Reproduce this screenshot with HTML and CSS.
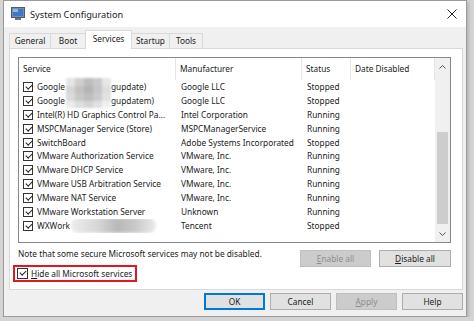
FILE: index.html
```html
<!DOCTYPE html>
<html lang="en">
<head>
  <meta charset="UTF-8">
  <title>System Configuration</title>
  <link rel="stylesheet" href="styles.css">
</head>
<body>

  <div class="window">
    <div class="titlebar">
      <svg class="app-icon" width="14" height="13" viewBox="0 0 14 13">
        <rect x="0.5" y="0.5" width="13" height="10" fill="#7d8da3" stroke="#4b5a70"/>
        <rect x="2" y="2" width="10" height="7" fill="#3f78c9"/>
        <rect x="2" y="2" width="5" height="3" fill="#8fb6e8"/>
        <rect x="4" y="11" width="6" height="2" fill="#6b7484"/>
      </svg>
      <span class="title">System Configuration</span>
      <svg class="close" width="10" height="10" viewBox="0 0 10 10">
        <path d="M0.5 0.5 L9.5 9.5 M9.5 0.5 L0.5 9.5" stroke="#222" stroke-width="1"/>
      </svg>
    </div>

    <div class="tabs">
      <div class="tab" style="width:40px">General</div>
      <div class="tab" style="width:34px">Boot</div>
      <div class="tab active" style="width:45px">Services</div>
      <div class="tab" style="width:37px">Startup</div>
      <div class="tab" style="width:32px">Tools</div>
    </div>

    <div class="panel">
      <div class="listbox">
        <div class="list">
          <div class="row head">
            <div class="cell">Service</div>
            <div class="cell">Manufacturer</div>
            <div class="cell">Status</div>
            <div class="cell">Date Disabled</div>
          </div>
          <div class="row">
            <div class="cell name"><span class="chk"></span>Google<span class="gap1"></span>gupdate)</div>
            <div class="cell">Google LLC</div>
            <div class="cell">Stopped</div>
            <div class="cell"></div>
          </div>
          <div class="row">
            <div class="cell name"><span class="chk"></span>Google<span class="gap1"></span>gupdatem)</div>
            <div class="cell">Google LLC</div>
            <div class="cell">Stopped</div>
            <div class="cell"></div>
          </div>
          <div class="row">
            <div class="cell name"><span class="chk"></span>Intel(R) HD Graphics Control Pa...</div>
            <div class="cell">Intel Corporation</div>
            <div class="cell">Running</div>
            <div class="cell"></div>
          </div>
          <div class="row">
            <div class="cell name"><span class="chk"></span>MSPCManager Service (Store)</div>
            <div class="cell">MSPCManagerService</div>
            <div class="cell">Running</div>
            <div class="cell"></div>
          </div>
          <div class="row">
            <div class="cell name"><span class="chk"></span>SwitchBoard</div>
            <div class="cell">Adobe Systems Incorporated</div>
            <div class="cell">Stopped</div>
            <div class="cell"></div>
          </div>
          <div class="row">
            <div class="cell name"><span class="chk"></span>VMware Authorization Service</div>
            <div class="cell">VMware, Inc.</div>
            <div class="cell">Running</div>
            <div class="cell"></div>
          </div>
          <div class="row">
            <div class="cell name"><span class="chk"></span>VMware DHCP Service</div>
            <div class="cell">VMware, Inc.</div>
            <div class="cell">Running</div>
            <div class="cell"></div>
          </div>
          <div class="row">
            <div class="cell name"><span class="chk"></span>VMware USB Arbitration Service</div>
            <div class="cell">VMware, Inc.</div>
            <div class="cell">Running</div>
            <div class="cell"></div>
          </div>
          <div class="row">
            <div class="cell name"><span class="chk"></span>VMware NAT Service</div>
            <div class="cell">VMware, Inc.</div>
            <div class="cell">Running</div>
            <div class="cell"></div>
          </div>
          <div class="row">
            <div class="cell name"><span class="chk"></span>VMware Workstation Server</div>
            <div class="cell">Unknown</div>
            <div class="cell">Running</div>
            <div class="cell"></div>
          </div>
          <div class="row">
            <div class="cell name"><span class="chk"></span>WXWork<span class="blur2"></span></div>
            <div class="cell">Tencent</div>
            <div class="cell">Stopped</div>
            <div class="cell"></div>
          </div>

          <!-- pixelated blur over the two Google rows -->
          <div class="blur1">
            <i style="background:#e4e4e4"></i><i style="background:#cfcfcf"></i><i style="background:#bdbdbd"></i><i style="background:#c9c9c9"></i><i style="background:#e6e6e6"></i>
            <i style="background:#d6d6d6"></i><i style="background:#c2c2c2"></i><i style="background:#b4b4b4"></i><i style="background:#c6c6c6"></i><i style="background:#dedede"></i>
            <i style="background:#dadada"></i><i style="background:#c8c8c8"></i><i style="background:#bfbfbf"></i><i style="background:#cbcbcb"></i><i style="background:#e2e2e2"></i>
            <i style="background:#ececec"></i><i style="background:#dddddd"></i><i style="background:#d4d4d4"></i><i style="background:#e0e0e0"></i><i style="background:#f0f0f0"></i>
          </div>
        </div>
        <div class="scrollbar">
          <div class="arrow">
            <svg width="7" height="4" viewBox="0 0 7 4"><path d="M0.5 3.5 L3.5 0.5 L6.5 3.5" fill="none" stroke="#555" stroke-width="1"/></svg>
          </div>
          <div class="track"><div class="thumb"></div></div>
          <div class="arrow">
            <svg width="7" height="4" viewBox="0 0 7 4"><path d="M0.5 0.5 L3.5 3.5 L6.5 0.5" fill="none" stroke="#555" stroke-width="1"/></svg>
          </div>
        </div>
      </div>

      <div class="panel-bottom">
        <div class="left">
          <div class="note">Note that some secure Microsoft services may not be disabled.</div>
          <div class="hide-box"><span class="chk"></span><span><u>H</u>ide all Microsoft services</span></div>
        </div>
        <div class="right">
          <div class="btn disabled" style="width:69px"><u>E</u>nable all</div>
          <div class="btn" style="width:70px"><u>D</u>isable all</div>
        </div>
      </div>
    </div>

    <div class="footer">
      <div class="btn default">OK</div>
      <div class="btn">Cancel</div>
      <div class="btn disabled"><u>A</u>pply</div>
      <div class="btn">Help</div>
    </div>
  </div>

</body>
</html>
```

FILE: styles.css
```css
body {
  margin: 0;
  background: #d4d4d4;
  font-family: "Noto Sans", "DejaVu Sans", sans-serif;
  font-size: 8.3px;
  color: #1b1b1b;
}

.window {
  margin-left: 3px;
  width: 462px;
  height: 315px;
  border: 1px solid #9a9a9a;
  background: #f0f0f0;
  box-shadow: 2px 2px 3px rgba(0,0,0,0.15);
}

.titlebar {
  height: 26px;
  background: #fff;
  display: flex;
  align-items: center;
  padding: 0 5px 0 7px;
}

.app-icon {
  margin-right: 5px;
  margin-top: -1px;
}

.title {
  font-size: 9.2px;
  flex: 1;
}

.close {
  margin-right: 4px;
}

/* tabs */
.tabs {
  height: 21px;
  display: flex;
  align-items: flex-end;
  padding-left: 5px;
}

.tab {
  height: 14px;
  line-height: 14px;
  text-align: center;
  border: 1px solid #d9d9d9;
  border-bottom: none;
  margin-right: -1px;
  background: #f0f0f0;
}

.tab.active {
  height: 18px;
  line-height: 15px;
  background: #fff;
  margin-bottom: -1px;
  position: relative;
  z-index: 1;
}

.panel {
  height: 232px;
  margin: 0 3px 0 5px;
  border: 1px solid #d9d9d9;
  background: #fff;
  padding: 8px 11px 0 8px;
}

/* list view */
.listbox {
  height: 184px;
  border: 1px solid #828790;
  display: flex;
}

.list {
  flex: 1;
  position: relative;
  overflow: hidden;
}

.row {
  display: grid;
  grid-template-columns: 157px 126px 49px 84px;
  height: 13.9px;
  line-height: 13.9px;
  white-space: nowrap;
}

.row .cell {
  padding-left: 5px;
  overflow: hidden;
}

.row .cell.name {
  padding-left: 4px;
  display: flex;
  align-items: center;
}

.row.head {
  height: 22px;
  line-height: 22px;
}

.row.head .cell {
  border-right: 1px solid #e5e5e5;
  padding-left: 4px;
}

.chk {
  display: inline-block;
  width: 8px;
  height: 8px;
  border: 1px solid #333;
  background: #fff;
  position: relative;
  margin-right: 4px;
  flex: none;
}

.chk::after {
  content: '';
  position: absolute;
  left: 2.5px;
  top: 0px;
  width: 2.5px;
  height: 5px;
  border: solid #222;
  border-width: 0 1px 1px 0;
  transform: rotate(45deg);
}

.gap1 {
  display: inline-block;
  width: 46px;
}

.blur1 {
  position: absolute;
  left: 47px;
  top: 20px;
  width: 45px;
  height: 30px;
  display: grid;
  grid-template-columns: repeat(5, 1fr);
  grid-template-rows: repeat(4, 1fr);
  filter: blur(1px);
}

.blur2 {
  display: inline-block;
  width: 85px;
  height: 15px;
  margin-left: 1px;
  border-radius: 7px;
  background: linear-gradient(90deg, #ececec 0%, #d8d8d8 30%, #b8b8b8 55%, #c8c8c8 75%, #ebebeb 100%);
  filter: blur(1.5px);
}

.scrollbar {
  width: 15px;
  background: #f0f0f0;
  display: flex;
  flex-direction: column;
}

.arrow {
  height: 17px;
  display: flex;
  align-items: center;
  justify-content: center;
}

.track {
  flex: 1;
  display: flex;
  flex-direction: column;
  justify-content: flex-end;
  padding: 0 2px 1px;
}

.thumb {
  height: 92px;
  background: #cdcdcd;
}

/* bottom of panel */
.panel-bottom {
  display: flex;
  justify-content: space-between;
  margin-top: 5px;
}

.note {
  line-height: 12px;
}

.hide-box {
  margin-top: 5px;
  margin-left: -5px;
  width: 118px;
  height: 13px;
  border: 2px solid #e2161f;
  display: flex;
  align-items: center;
  padding-left: 2px;
}

.hide-box .chk {
  width: 9px;
  height: 9px;
  margin-right: 3px;
}

.right {
  display: flex;
  gap: 8px;
  padding-top: 2px;
}

.btn {
  height: 15px;
  line-height: 15px;
  text-align: center;
  background: #e1e1e1;
  border: 1px solid #adadad;
}

.btn.disabled {
  background: #cccccc;
  border-color: #bfbfbf;
  color: #8c8c8c;
}

.btn.default {
  border-color: #0078d7;
  box-shadow: inset 0 0 0 1px #0078d7;
}

.footer {
  display: flex;
  justify-content: flex-end;
  gap: 5px;
  padding: 3px 3px 0 0;
}

.footer .btn {
  width: 59px;
}
```
